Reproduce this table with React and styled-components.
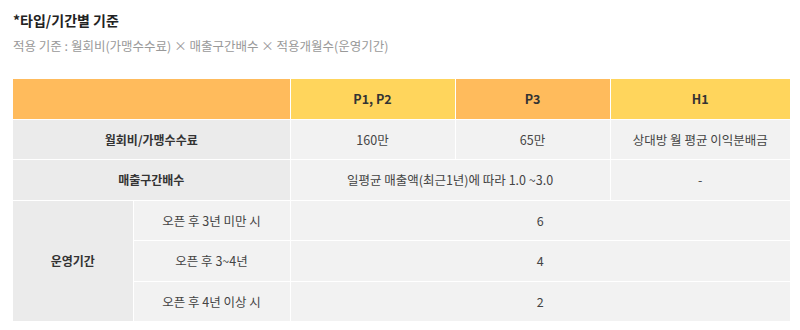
import React from "react";
import styled, { createGlobalStyle } from "styled-components";

const GlobalStyle = createGlobalStyle`
  body {
    margin: 0;
    background: #fff;
    font-family: "Noto Sans CJK KR", "Noto Sans", sans-serif;
    color: #333;
  }
`;

const rows = [
  { label: "오픈 후 3년 미만 시", value: "6" },
  { label: "오픈 후 3~4년", value: "4" },
  { label: "오픈 후 4년 이상 시", value: "2" },
];

export default function App() {
  return (
    <>
      <GlobalStyle />
      <Wrapper>
        <Title>*타입/기간별 기준</Title>
        <Desc>적용 기준 : 월회비(가맹수수료) × 매출구간배수 × 적용개월수(운영기간)</Desc>
        <Table>
          <colgroup>
            <col style={{ width: 120 }} />
            <col style={{ width: 157 }} />
            <col style={{ width: 165 }} />
            <col style={{ width: 155 }} />
            <col style={{ width: 180 }} />
          </colgroup>
          <thead>
            <tr>
              <Head colSpan={2} $tone="orange" />
              <Head $tone="yellow">P1, P2</Head>
              <Head $tone="orange">P3</Head>
              <Head $tone="yellow">H1</Head>
            </tr>
          </thead>
          <tbody>
            <tr>
              <Label colSpan={2}>월회비/가맹수수료</Label>
              <Cell>160만</Cell>
              <Cell>65만</Cell>
              <Cell>상대방 월 평균 이익분배금</Cell>
            </tr>
            <tr>
              <Label colSpan={2}>매출구간배수</Label>
              <Cell colSpan={2}>일평균 매출액(최근1년)에 따라 1.0 ~3.0</Cell>
              <Cell>-</Cell>
            </tr>
            {rows.map((row, i) => (
              <tr key={row.label}>
                {i === 0 && <Label rowSpan={3}>운영기간</Label>}
                <Cell>{row.label}</Cell>
                <Cell colSpan={3}>{row.value}</Cell>
              </tr>
            ))}
          </tbody>
        </Table>
      </Wrapper>
    </>
  );
}

const Wrapper = styled.div`
  padding: 10px 10px 0 13px;
`;

const Title = styled.h2`
  margin: 0;
  font-size: 14px;
  font-weight: 700;
  color: #222;
  line-height: 20px;
`;

const Desc = styled.p`
  margin: 6px 0 0;
  font-size: 12.5px;
  color: #999;
  line-height: 20px;
`;

const Table = styled.table`
  margin-top: 23px;
  width: 777px;
  border-collapse: collapse;
  table-layout: fixed;
  font-size: 12.5px;

  th,
  td {
    border: 1px solid #fff;
    height: 39.5px;
    padding: 0;
    text-align: center;
    vertical-align: middle;
  }
  tr:first-child > * { border-top: 0; }
  tr > *:first-child { border-left: 0; }
  tr > *:last-child { border-right: 0; }
`;

const Head = styled.th`
  background: ${(p) => (p.$tone === "orange" ? "#ffbb5c" : "#ffd55c")};
  font-weight: 700;
  font-size: 12.5px;
  color: #333;
`;

const Label = styled.td`
  background: #ebebeb;
  font-weight: 700;
  font-size: 12px;
  color: #333;
`;

const Cell = styled.td`
  background: #f2f2f2;
  color: #444;
`;
